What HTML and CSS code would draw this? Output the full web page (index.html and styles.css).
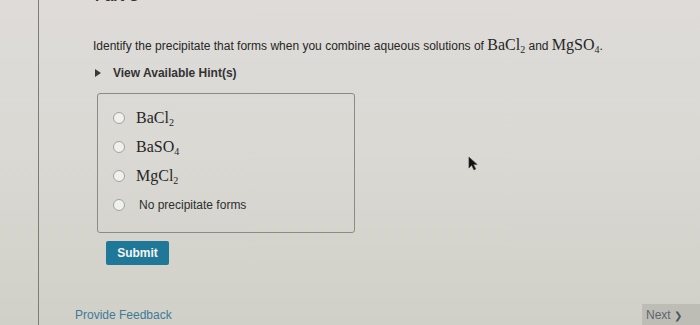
FILE: index.html
```html
<!DOCTYPE html>
<html lang="en">
<head>
  <meta charset="UTF-8" />
  <meta name="viewport" content="width=device-width, initial-scale=1.0" />
  <title>Part C</title>
  <link rel="stylesheet" href="styles.css">
</head>
<body>
  <div class="page">
    <div class="content">
      <div class="part">Part C</div>
      <p class="question">
        Identify the precipitate that forms when you combine aqueous solutions of
        <span class="chem">BaCl<sub>2</sub></span> and <span class="chem">MgSO<sub>4</sub></span>.
      </p>
      <div class="hint"><span class="arrow"></span>View Available Hint(s)</div>

      <div class="options">
        <label class="option"><span class="radio"></span><span class="chem">BaCl<sub>2</sub></span></label>
        <label class="option"><span class="radio"></span><span class="chem">BaSO<sub>4</sub></span></label>
        <label class="option"><span class="radio"></span><span class="chem">MgCl<sub>2</sub></span></label>
        <label class="option"><span class="radio"></span><span class="plain">No precipitate forms</span></label>
      </div>

      <button class="submit">Submit</button>
    </div>

    <div class="footer">
      <a class="feedback">Provide Feedback</a>
      <button class="next">Next <span class="chev">&#x276F;</span></button>
    </div>

    <svg class="cursor" width="11" height="15" viewBox="0 0 12 16">
      <path d="M1 1 L1 13 L4 10 L6.5 15 L8.5 14 L6 9 L10 9 Z" fill="#111" stroke="#444" stroke-width="0.6"/>
    </svg>
  </div>
</body>
</html>
```

FILE: styles.css
```css
html, body {
  margin: 0;
  height: 100%;
}
body {
  font-family: "Liberation Sans", Arial, sans-serif;
  color: #2e2e2e;
  background: linear-gradient(180deg, #dedbd8 0%, #dad9d4 45%, #d0d0c8 100%);
  overflow: hidden;
}
.page {
  position: relative;
  height: 325px;
  margin-left: 38px;
  border-left: 1px solid #7d7d78;
  display: flex;
  flex-direction: column;
}
.content {
  padding-left: 54px;
  flex: 1;
}
.part {
  font-weight: bold;
  font-size: 15px;
  line-height: 16px;
  margin-top: -12px;
  padding-left: 2px;
  color: #333;
}
.question {
  margin: 31px 0 0;
  font-size: 12px;
  line-height: 20px;
  color: #262626;
}
.chem {
  font-family: "Liberation Serif", "Times New Roman", serif;
  font-size: 16px;
  color: #262626;
}
.chem sub {
  font-size: 10px;
  vertical-align: -3px;
  line-height: 0;
}
.hint {
  margin-top: 9px;
  font-size: 12px;
  font-weight: bold;
  line-height: 16px;
  color: #333;
  display: flex;
  align-items: center;
}
.arrow {
  width: 0;
  height: 0;
  border-top: 4px solid transparent;
  border-bottom: 4px solid transparent;
  border-left: 6px solid #3a3a3a;
  margin: 0 12px 0 2px;
}
.options {
  margin: 12px 0 0 4px;
  width: 256px;
  height: 129px;
  border: 1px solid #8a8a86;
  border-radius: 3px;
  display: flex;
  flex-direction: column;
  padding-top: 9px;
}
.option {
  display: flex;
  align-items: center;
  height: 29px;
  padding-left: 15px;
  gap: 11px;
}
.radio {
  width: 10px;
  height: 10px;
  border: 1px solid #a2a29e;
  border-radius: 50%;
  background: #f0f0ec;
  flex: none;
}
.plain {
  font-size: 12px;
  color: #2e2e2e;
  margin-left: 3px;
}
.submit {
  margin: 8px 0 0 13px;
  width: 63px;
  height: 24px;
  border: none;
  border-radius: 2px;
  background: #1f7897;
  color: #f4f4f4;
  font-family: "Liberation Sans", Arial, sans-serif;
  font-size: 12px;
  font-weight: bold;
  padding: 0;
}
.footer {
  display: flex;
  justify-content: space-between;
  align-items: flex-end;
  padding-left: 36px;
  height: 24px;
}
.feedback {
  font-size: 12px;
  color: #3d7b98;
  line-height: 20px;
}
.next {
  width: 58px;
  height: 21px;
  border: none;
  background: #bdbdb6;
  color: #5c666e;
  font-family: "Liberation Sans", Arial, sans-serif;
  font-size: 12px;
  padding: 0 0 0 4px;
  text-align: left;
}
.chev {
  font-size: 10px;
  color: #4a5560;
}
.cursor {
  position: absolute;
  left: 429px;
  top: 156px;
}
```
